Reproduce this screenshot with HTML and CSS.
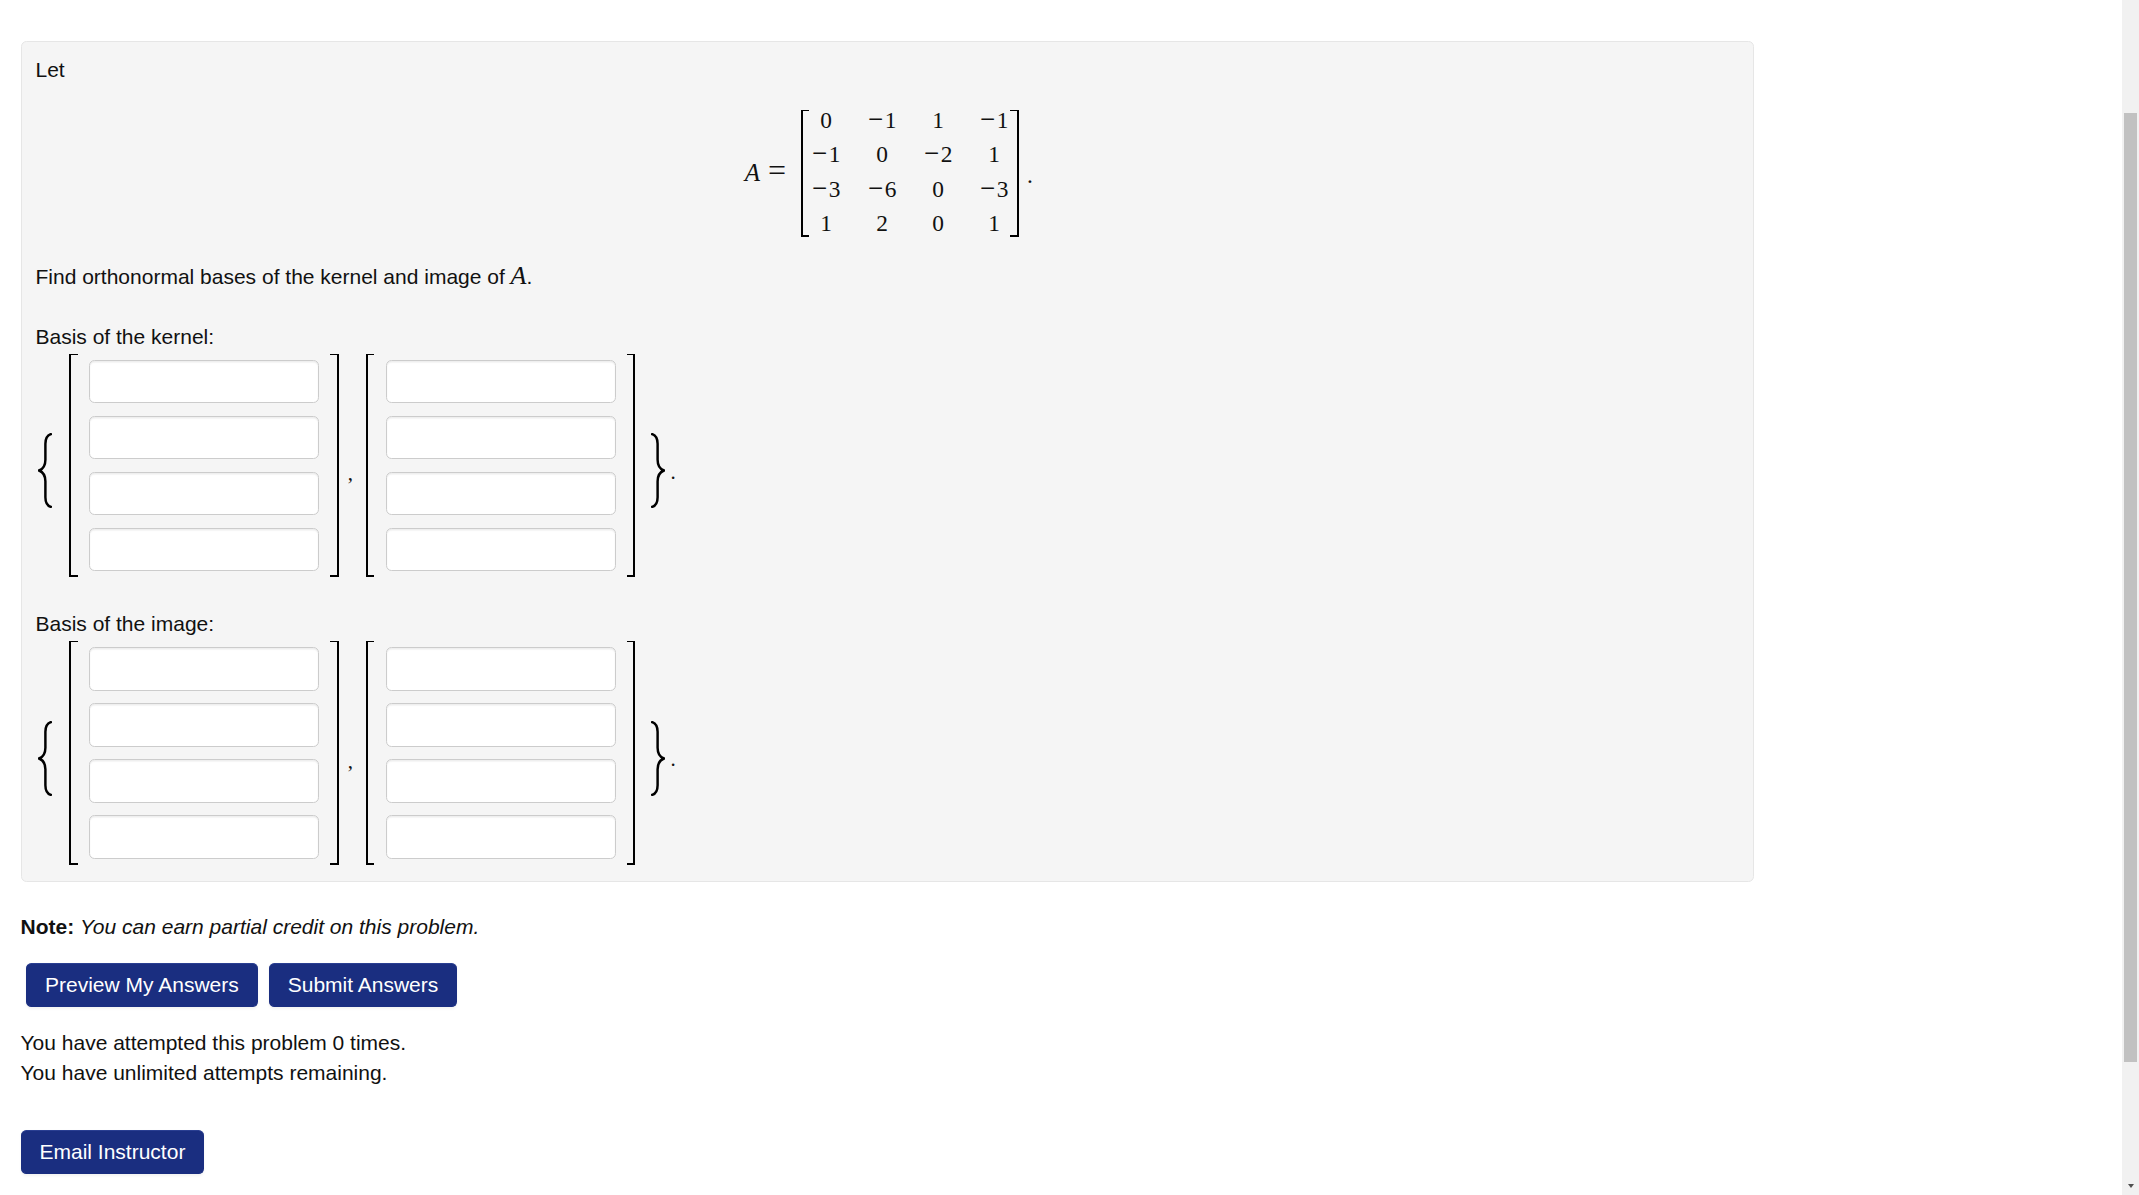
FILE: index.html
```html
<!DOCTYPE html>
<html lang="en">
<head>
  <meta charset="UTF-8" />
  <title>Problem</title>
  <link rel="stylesheet" href="styles.css">
</head>
<body>

  <div class="page">

    <!-- PROBLEM CARD -->
    <div class="problem">
      <p class="line">Let</p>

      <div class="equation">
        <span class="eq-name"><i>A</i><span class="eq-sign">=</span></span>
        <span class="bracket left"></span>
        <div class="matrix">
          <span>0</span><span><span class="minus">−</span>1</span><span>1</span><span><span class="minus">−</span>1</span>
          <span><span class="minus">−</span>1</span><span>0</span><span><span class="minus">−</span>2</span><span>1</span>
          <span><span class="minus">−</span>3</span><span><span class="minus">−</span>6</span><span>0</span><span><span class="minus">−</span>3</span>
          <span>1</span><span>2</span><span>0</span><span>1</span>
        </div>
        <span class="bracket right"></span>
        <span class="eq-dot">.</span>
      </div>

      <p class="line find">Find orthonormal bases of the kernel and image of <i class="math">A</i>.</p>

      <p class="line label">Basis of the kernel:</p>
      <div class="answer-set">
        <svg class="brace" viewBox="0 0 14 76"><path d="M14 .8C9.5 1.8 7.4 5 7.4 11V27C7.4 32.5 5 36.4 1 38 5 39.6 7.4 43.5 7.4 49V65C7.4 71 9.5 74.2 14 75.2" /></svg>
        <span class="bracket left"></span>
        <div class="cells">
          <input type="text" /><input type="text" /><input type="text" /><input type="text" />
        </div>
        <span class="bracket right"></span>
        <span class="comma">,</span>
        <span class="bracket left"></span>
        <div class="cells">
          <input type="text" /><input type="text" /><input type="text" /><input type="text" />
        </div>
        <span class="bracket right"></span>
        <svg class="brace closing" viewBox="0 0 14 76"><path d="M14 .8C9.5 1.8 7.4 5 7.4 11V27C7.4 32.5 5 36.4 1 38 5 39.6 7.4 43.5 7.4 49V65C7.4 71 9.5 74.2 14 75.2" /></svg>
        <span class="set-dot">.</span>
      </div>

      <p class="line label label-image">Basis of the image:</p>
      <div class="answer-set">
        <svg class="brace" viewBox="0 0 14 76"><path d="M14 .8C9.5 1.8 7.4 5 7.4 11V27C7.4 32.5 5 36.4 1 38 5 39.6 7.4 43.5 7.4 49V65C7.4 71 9.5 74.2 14 75.2" /></svg>
        <span class="bracket left"></span>
        <div class="cells">
          <input type="text" /><input type="text" /><input type="text" /><input type="text" />
        </div>
        <span class="bracket right"></span>
        <span class="comma">,</span>
        <span class="bracket left"></span>
        <div class="cells">
          <input type="text" /><input type="text" /><input type="text" /><input type="text" />
        </div>
        <span class="bracket right"></span>
        <svg class="brace closing" viewBox="0 0 14 76"><path d="M14 .8C9.5 1.8 7.4 5 7.4 11V27C7.4 32.5 5 36.4 1 38 5 39.6 7.4 43.5 7.4 49V65C7.4 71 9.5 74.2 14 75.2" /></svg>
        <span class="set-dot">.</span>
      </div>
    </div>

    <p class="line note"><b>Note:</b> <i>You can earn partial credit on this problem.</i></p>

    <div class="actions">
      <button>Preview My Answers</button>
      <button>Submit Answers</button>
    </div>

    <div class="attempts">
      <p class="line">You have attempted this problem 0 times.</p>
      <p class="line">You have unlimited attempts remaining.</p>
    </div>

    <button class="email">Email Instructor</button>
  </div>

  <!-- SCROLLBAR -->
  <div class="scrollbar">
    <div class="thumb"></div>
    <div class="arrow"></div>
  </div>

</body>
</html>
```

FILE: styles.css
```css
* {
  margin: 0;
  padding: 0;
  box-sizing: border-box;
}

body {
  display: flex;
  height: 100vh;
  overflow: hidden;
  background: #fff;
  color: #111;
  font-family: "Liberation Sans", Arial, sans-serif;
  font-size: 21px;
  line-height: 30px;
}

.page {
  flex: 1;
  padding: 41px 368px 0 20.5px;
}

.line {
  height: 30px;
}

/* PROBLEM CARD */
.problem {
  background: #f5f5f5;
  border: 1.4px solid #e6e6e6;
  border-radius: 5.5px;
  padding: 12.6px 14px 14px;
  height: 840.5px;
}

.find {
  margin-top: 1px;
}

.math {
  font-family: "Liberation Serif", serif;
  font-size: 26px;
  line-height: 0;
}

.label {
  margin-top: 30px;
}

.label-image {
  margin-top: 32.2px;
}

/* MATRIX */
.equation {
  display: flex;
  justify-content: center;
  align-items: stretch;
  height: 127px;
  margin: 25px 0 25.4px;
  padding-left: 3px;
  font-family: "Liberation Serif", serif;
  font-size: 23.4px;
}

.eq-name {
  align-self: center;
  display: flex;
  align-items: baseline;
  margin-right: 15px;
  font-size: 25px;
}

.eq-sign {
  margin-left: 8px;
  font-size: 32px;
  line-height: 0;
}

.eq-dot {
  align-self: center;
  margin-left: 8px;
  padding-top: 4px;
}

.matrix {
  display: grid;
  grid-template-columns: repeat(4, 56px);
  grid-auto-rows: 34.6px;
  align-content: center;
  justify-items: center;
  margin: -2.8px -11.7px 0 -11.3px;
  line-height: 34.6px;
}

.minus {
  margin-right: 1.5px;
  font-size: 27px;
  line-height: 0;
}

.bracket {
  flex: none;
  width: 8.5px;
  border-style: solid;
  border-color: #000;
  border-width: 1.6px 0 2.4px;
}

.bracket.left {
  border-left-width: 2.7px;
}

.bracket.right {
  border-right-width: 2.7px;
}

/* ANSWER BLANKS */
.answer-set {
  display: flex;
  align-items: stretch;
  height: 223.7px;
  margin-top: 1.6px;
  font-family: "Liberation Serif", serif;
}

.brace {
  flex: none;
  align-self: center;
  width: 14px;
  height: 75px;
  margin: 11px 17px 0 2.5px;
}

.brace path {
  fill: none;
  stroke: #000;
  stroke-width: 2.5;
}

.brace.closing {
  transform: scaleX(-1);
  margin: 11px 0 0 16px;
}

.cells {
  display: flex;
  flex-direction: column;
  gap: 12.3px;
  padding: 6px 0;
  margin: 0 11.2px 0 11.5px;
}

.cells input {
  display: block;
  width: 230px;
  height: 44px;
  background: #fff;
  border: 1.4px solid #ccc;
  border-radius: 5.5px;
  box-shadow: inset 0 1.4px 1.4px rgba(0, 0, 0, 0.075);
}

.comma {
  align-self: center;
  margin: 0 12.5px 0 9px;
  padding-top: 16px;
  width: 5.5px;
}

.set-dot {
  align-self: center;
  margin-left: 5px;
  padding-top: 13px;
}

/* NOTE, BUTTONS */
.note {
  margin-top: 30.3px;
}

.actions {
  display: flex;
  gap: 11px;
  margin: 21.2px 0 21.3px 5.5px;
}

button {
  height: 43.7px;
  padding: 0 18px;
  background: #1a2e80;
  border: 1.4px solid #1a2e80;
  border-top-color: #2a3f92;
  border-radius: 5.5px;
  box-shadow: 0 1.4px 2.8px rgba(0, 0, 0, 0.05);
  color: #fff;
  font-family: inherit;
  font-size: 21px;
}

.email {
  margin-top: 42px;
}

/* SCROLLBAR */
.scrollbar {
  flex: none;
  display: flex;
  flex-direction: column;
  align-items: center;
  width: 17px;
  background: #f1f1f1;
}

.thumb {
  width: 13px;
  height: 949px;
  margin-top: 113px;
  background: #c1c1c1;
}

.arrow {
  width: 0;
  height: 0;
  margin-top: 122px;
  border-style: solid;
  border-width: 4px 3.5px 0;
  border-color: #505050 transparent transparent;
}
```
